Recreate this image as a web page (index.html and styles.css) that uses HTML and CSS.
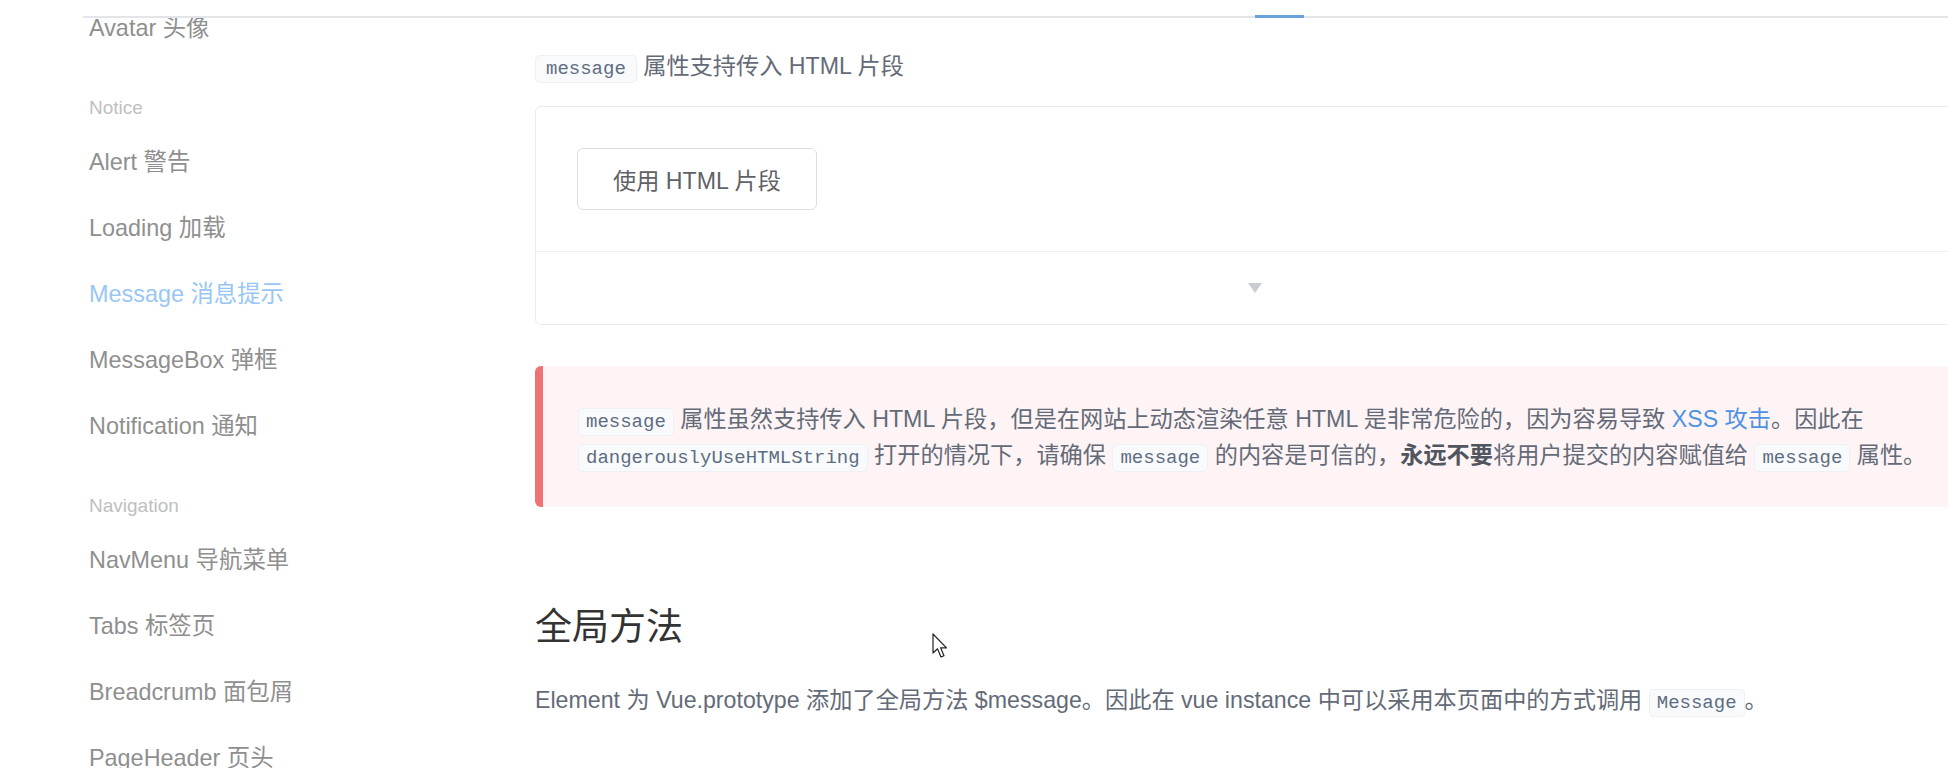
FILE: index.html
```html
<!DOCTYPE html>
<html lang="zh-CN">
<head>
    <meta charset="UTF-8">
    <meta name="viewport" content="width=device-width, initial-scale=1.0">
    <title>Message 消息提示</title>
    <link rel="stylesheet" href="styles.css">
</head>
<body>
    <header class="topbar">
        <div class="tab-active"></div>
    </header>
    <div class="page">
        <aside class="sidebar">
            <ul class="nav-list">
                <li class="nav-item">Avatar 头像</li>
                <li class="nav-group">Notice</li>
                <li class="nav-item">Alert 警告</li>
                <li class="nav-item">Loading 加载</li>
                <li class="nav-item active">Message 消息提示</li>
                <li class="nav-item">MessageBox 弹框</li>
                <li class="nav-item">Notification 通知</li>
                <li class="nav-group">Navigation</li>
                <li class="nav-item">NavMenu 导航菜单</li>
                <li class="nav-item">Tabs 标签页</li>
                <li class="nav-item">Breadcrumb 面包屑</li>
                <li class="nav-item">PageHeader 页头</li>
            </ul>
        </aside>
        <main class="content">
            <p class="intro"><code>message</code> 属性支持传入 HTML 片段</p>

            <div class="demo-block">
                <div class="source">
                    <button class="el-button">使用 HTML 片段</button>
                </div>
                <div class="demo-control">
                    <span class="caret"></span>
                </div>
            </div>

            <div class="tip-danger">
                <p><code>message</code> 属性虽然支持传入 HTML 片段，但是在网站上动态渲染任意 HTML 是非常危险的，因为容易导致 <a href="#">XSS 攻击</a>。因此在 <code>dangerouslyUseHTMLString</code> 打开的情况下，请确保 <code>message</code> 的内容是可信的，<strong>永远不要</strong>将用户提交的内容赋值给 <code>message</code> 属性。</p>
            </div>

            <h3>全局方法</h3>
            <p class="text">Element 为 Vue.prototype 添加了全局方法 $message。因此在 vue instance 中可以采用本页面中的方式调用 <code>Message</code>。</p>

            <svg class="cursor" width="16" height="26" viewBox="0 0 16 26">
                <path d="M1 1 L1 20 L5.5 15.8 L9 24 L12 22.7 L8.6 14.8 L14.5 14.8 Z" fill="#fff" stroke="#222" stroke-width="1.2" stroke-linejoin="round"/>
            </svg>
        </main>
    </div>
</body>
</html>
```

FILE: styles.css
```css
body {
    margin: 0;
    padding: 0;
    background-color: #fff;
    font-family: "Liberation Sans", "Noto Sans CJK SC", sans-serif;
    overflow: hidden;
}
.topbar {
    display: flex;
    align-items: flex-end;
    height: 18px;
    margin-left: 83px;
    box-sizing: border-box;
    border-bottom: 2px solid #e3e5e9;
}
.tab-active {
    width: 49px;
    height: 3px;
    margin-left: 1172px;
    margin-bottom: -2px;
    background-color: #6aa2dc;
}
.page {
    display: flex;
    height: 750px;
}
.sidebar {
    width: 535px;
    flex: none;
    padding-left: 89px;
    box-sizing: border-box;
    overflow: hidden;
}
.nav-list {
    list-style: none;
    margin: -23px 0 0;
    padding: 0;
}
.nav-item {
    height: 66px;
    line-height: 66px;
    font-size: 23.4px;
    color: #8f8f8f;
    white-space: nowrap;
}
.nav-item.active {
    color: #98c7f4;
}
.nav-group {
    margin: 34px 0 8px;
    line-height: 26px;
    font-size: 19px;
    color: #bfbfbf;
}
.content {
    position: relative;
    width: 1440px;
    flex: none;
    color: #646b78;
    font-size: 23.2px;
}
code {
    font-family: "Liberation Mono", monospace;
    font-size: 19px;
    line-height: 1;
    color: #5e6d82;
    background-color: #f9fafc;
    border: 1px solid #eef0f6;
    border-radius: 5px;
    padding: 2px 7px;
}
.intro {
    margin: 30px 0 0;
    line-height: 36px;
}
.intro code {
    padding: 2px 10px;
}
.demo-block {
    margin-top: 22px;
    border: 1px solid #ebebeb;
    border-radius: 6px;
}
.source {
    padding: 41px;
}
.el-button {
    display: block;
    height: 62px;
    padding: 0 35px;
    font-family: "Liberation Sans", "Noto Sans CJK SC", sans-serif;
    font-size: 23.2px;
    color: #5f6266;
    background-color: #fff;
    border: 1px solid #dcdfe6;
    border-radius: 6px;
}
.demo-control {
    display: flex;
    justify-content: center;
    align-items: center;
    height: 72px;
    border-top: 1px solid #eceef2;
}
.caret {
    width: 0;
    height: 0;
    border-left: 7px solid transparent;
    border-right: 7px solid transparent;
    border-top: 10px solid #c9cdd3;
}
.tip-danger {
    margin-top: 41px;
    padding: 35px 20px 34px 35px;
    background-color: #fef4f5;
    border-left: 8px solid #f07275;
    border-radius: 6px;
}
.tip-danger p {
    margin: 0;
    line-height: 36px;
}
.tip-danger a {
    color: #4f93e0;
    text-decoration: none;
}
.tip-danger strong {
    color: #505560;
}
h3 {
    margin: 96px 0 0;
    font-size: 37px;
    font-weight: normal;
    line-height: 50px;
    color: #333;
}
.text {
    margin: 29px 0 0;
    line-height: 36px;
}
.cursor {
    position: absolute;
    left: 397px;
    top: 615px;
}
```
